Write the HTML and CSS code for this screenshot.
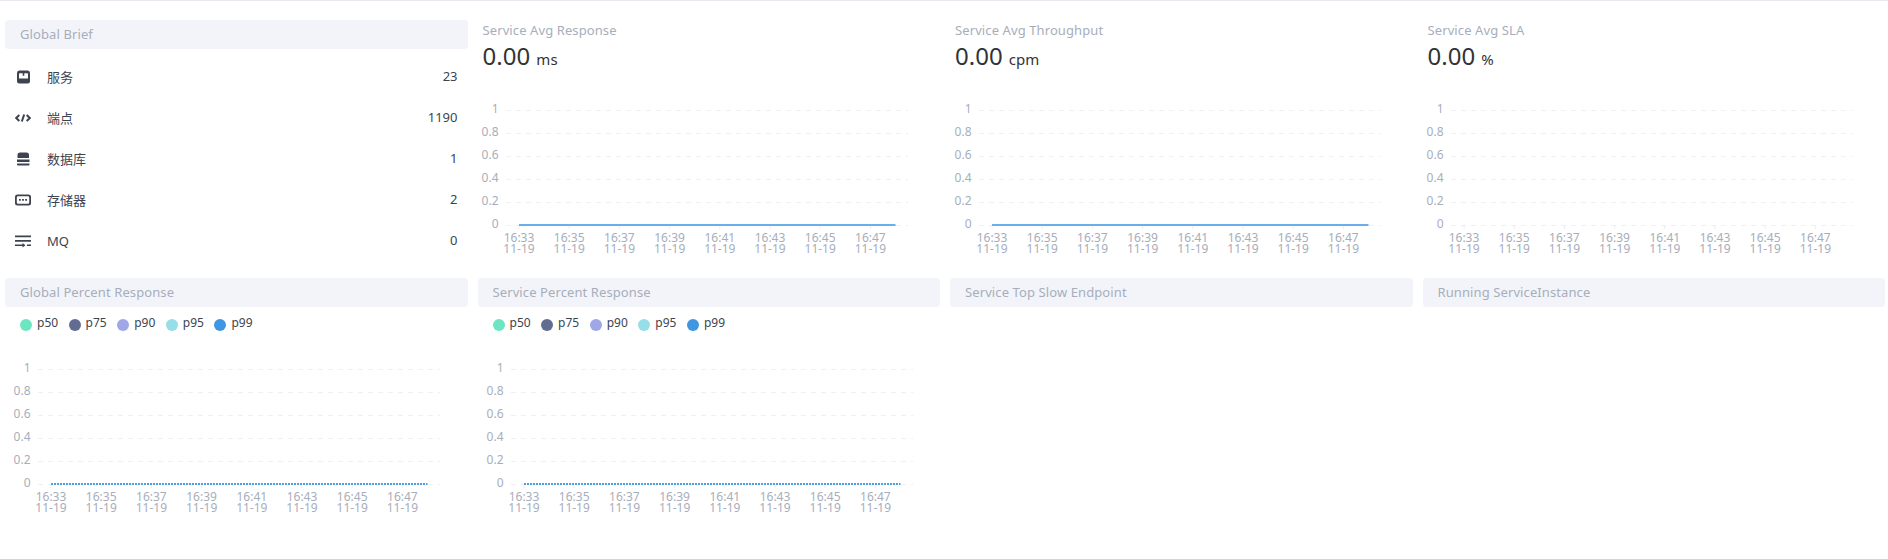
FILE: index.html
```html
<!DOCTYPE html>
<html lang="zh">
<head>
    <meta charset="UTF-8">
    <meta name="viewport" content="width=device-width, initial-scale=1.0">
    <title>Global Dashboard</title>
    <link rel="stylesheet" href="styles.css">
</head>
<body>
    <div class="dashboard">
        <section class="panel">
            <h2 class="panel-title">Global Brief</h2>
            <ul class="brief-list">
                <li class="brief-row">
                    <svg class="brief-icon" viewBox="0 0 16 16"><path fill-rule="evenodd" d="M4.300 1.500h8.400A2.500 2.500 0 0 1 15 4v8a2.500 2.500 0 0 1-2.500 2.500h-8A2.500 2.500 0 0 1 2 12V4a2.500 2.500 0 0 1 2.300-2.500zM4 5a.8.8 0 0 1 .8-.8h2.900v2.500h1.600V4.200h2.900a.8.8 0 0 1 .8.8v4.500H4z"/></svg>
                    <span class="brief-label">服务</span>
                    <span class="brief-num">23</span>
                </li>
                <li class="brief-row">
                    <svg class="brief-icon" viewBox="0 0 16 16"><path class="icon-line" d="M4.300 5 1.200 8l3.100 3M11.700 5 14.800 8l-3.100 3M9.200 4.500 6.800 11.500"/></svg>
                    <span class="brief-label">端点</span>
                    <span class="brief-num">1190</span>
                </li>
                <li class="brief-row">
                    <svg class="brief-icon" viewBox="0 0 16 16"><path d="M5 1.500h6.500A2.500 2.500 0 0 1 14 4v3H2.500V4A2.500 2.500 0 0 1 5 1.500zM2 8.500h12.500v2.500H2zM2 12.500h12.500v1a1 1 0 0 1-1 1H3a1 1 0 0 1-1-1z"/></svg>
                    <span class="brief-label">数据库</span>
                    <span class="brief-num">1</span>
                </li>
                <li class="brief-row">
                    <svg class="brief-icon" viewBox="0 0 16 16"><path fill-rule="evenodd" d="M2.500 2.500h11A2.500 2.500 0 0 1 16 5v6a2.500 2.500 0 0 1-2.500 2.500h-11A2.500 2.500 0 0 1 0 11V5a2.500 2.500 0 0 1 2.500-2.500zM3 4.300A1.200 1.200 0 0 0 1.800 5.500v5A1.200 1.200 0 0 0 3 11.700h10a1.200 1.200 0 0 0 1.200-1.200v-5A1.200 1.200 0 0 0 13 4.300z"/><path d="M4 7h1.800v1.800H4zM7.100 7h1.800v1.800H7.100zM10.200 7H12v1.800h-1.800z"/></svg>
                    <span class="brief-label">存储器</span>
                    <span class="brief-num">2</span>
                </li>
                <li class="brief-row">
                    <svg class="brief-icon" viewBox="0 0 16 16"><path d="M0 2.500h16v1.700H0zM0 7h16v1.700H0zM0 11.500h7.500V10l3 2.300-3 2.300V13.100H0zM12 11.500h4v1.600h-4z"/></svg>
                    <span class="brief-label">MQ</span>
                    <span class="brief-num">0</span>
                </li>
            </ul>
        </section>

        <section class="panel panel-stat">
            <h2 class="stat-title">Service Avg Response</h2>
            <p class="stat-value">0.00 <span class="stat-unit">ms</span></p>
            <div class="chart chart-top" data-series="solid"></div>
        </section>

        <section class="panel panel-stat">
            <h2 class="stat-title">Service Avg Throughput</h2>
            <p class="stat-value">0.00 <span class="stat-unit">cpm</span></p>
            <div class="chart chart-top" data-series="solid"></div>
        </section>

        <section class="panel panel-stat">
            <h2 class="stat-title">Service Avg SLA</h2>
            <p class="stat-value">0.00 <span class="stat-unit">%</span></p>
            <div class="chart chart-top" data-series="none"></div>
        </section>

        <section class="panel">
            <h2 class="panel-title">Global Percent Response</h2>
            <ul class="legend">
                <li class="legend-item"><i class="legend-dot p50"></i>p50</li>
                <li class="legend-item"><i class="legend-dot p75"></i>p75</li>
                <li class="legend-item"><i class="legend-dot p90"></i>p90</li>
                <li class="legend-item"><i class="legend-dot p95"></i>p95</li>
                <li class="legend-item"><i class="legend-dot p99"></i>p99</li>
            </ul>
            <div class="chart" data-series="dotted"></div>
        </section>

        <section class="panel">
            <h2 class="panel-title">Service Percent Response</h2>
            <ul class="legend">
                <li class="legend-item"><i class="legend-dot p50"></i>p50</li>
                <li class="legend-item"><i class="legend-dot p75"></i>p75</li>
                <li class="legend-item"><i class="legend-dot p90"></i>p90</li>
                <li class="legend-item"><i class="legend-dot p95"></i>p95</li>
                <li class="legend-item"><i class="legend-dot p99"></i>p99</li>
            </ul>
            <div class="chart" data-series="dotted"></div>
        </section>

        <section class="panel">
            <h2 class="panel-title">Service Top Slow Endpoint</h2>
        </section>

        <section class="panel">
            <h2 class="panel-title">Running ServiceInstance</h2>
        </section>
    </div>

    <script src="charts.js"></script>
</body>
</html>
```

FILE: styles.css
```css
* {
    box-sizing: border-box;
}

body {
    font-family: "Noto Sans", "Noto Sans CJK SC", sans-serif;
    font-size: 13px;
    color: #3d444f;
    background-color: #fff;
    margin: 0;
    border-top: 1px solid #e8e9ee;
}

.dashboard {
    display: grid;
    grid-template-columns: repeat(4, 462.5px);
    grid-template-rows: 258px auto;
    column-gap: 10px;
    padding: 19px 0 0 5px;
}

.panel-title {
    height: 29px;
    line-height: 28px;
    margin: 0;
    padding-left: 15px;
    font-size: 13px;
    font-weight: normal;
    letter-spacing: 0.1px;
    color: #a7aebb;
    background-color: #f3f4f9;
    border-radius: 4px;
}

.brief-list {
    list-style: none;
    margin: 0;
    padding: 7px 10px 0 0;
}

.brief-row {
    display: flex;
    align-items: center;
    height: 41px;
}

.brief-icon {
    flex: none;
    width: 16px;
    height: 16px;
    margin: 0 16px 0 10px;
    fill: #3d444f;
}

.icon-line {
    fill: none;
    stroke: #3d444f;
    stroke-width: 2;
}

.brief-label {
    flex: 1;
}

.brief-num {
    position: relative;
    top: -1px;
}

.panel-stat {
    padding-left: 5px;
}

.stat-title {
    height: 20px;
    line-height: 20px;
    margin: 0;
    font-size: 13px;
    font-weight: normal;
    letter-spacing: 0.1px;
    color: #a7aebb;
}

.stat-value {
    height: 34px;
    line-height: 32px;
    margin: 0;
    font-size: 24px;
    color: #333;
}

.stat-unit {
    font-size: 15px;
}

.chart {
    height: 160px;
}

.chart-top {
    margin: 26px 0 0 -9.500px;
}

.chart svg {
    display: block;
    overflow: visible;
}

.chart text {
    font-size: 12px;
    fill: #a7aebb;
}

.grid-line {
    stroke: #f0f0f3;
    stroke-dasharray: 5 5;
}

.tick {
    stroke: #eeeef1;
}

.line-solid {
    stroke: #6aaeea;
    stroke-width: 2;
}

.line-dotted {
    stroke: #4d9fe4;
    stroke-width: 2;
    stroke-dasharray: 2 1;
}

.legend {
    display: flex;
    gap: 10.500px;
    list-style: none;
    height: 18px;
    margin: 9px 0 25px;
    padding-left: 15px;
    font-size: 12px;
    line-height: 14px;
    color: #3d444f;
}

.legend-item {
    display: flex;
    align-items: flex-start;
    gap: 5px;
}

.legend-dot {
    width: 12px;
    height: 12px;
    margin-top: 3px;
    border-radius: 50%;
}

.p50 {
    background-color: #6be6c1;
}

.p75 {
    background-color: #626c91;
}

.p90 {
    background-color: #a0a7e6;
}

.p95 {
    background-color: #96dee8;
}

.p99 {
    background-color: #3f96e3;
}
```

FILE: charts.js
```js
const yLabels = ['1', '0.8', '0.6', '0.4', '0.2', '0'];
const xLabels = ['16:33', '16:35', '16:37', '16:39', '16:41', '16:43', '16:45', '16:47'];

const gridLeft = 33;
const gridRight = 435;
const firstTick = 46;
const tickStep = 50.2;
const lineEnd = 422.500;

function drawChart(el) {
    let svg = '<svg width="462" height="160">';

    yLabels.forEach((label, i) => {
        const y = 10.5 + i * 23;
        svg += `<line class="grid-line" x1="${gridLeft}" x2="${gridRight}" y1="${y}" y2="${y}"></line>`;
        svg += `<text x="25.500" y="${y + 2.5}" text-anchor="end">${label}</text>`;
    });

    xLabels.forEach((label, i) => {
        const x = firstTick + i * tickStep;
        svg += `<line class="tick" x1="${x}" x2="${x}" y1="125" y2="129"></line>`;
        svg += `<text text-anchor="middle"><tspan x="${x}" y="141.500">${label}</tspan><tspan x="${x}" dy="11">11-19</tspan></text>`;
    });

    const kind = el.dataset.series;
    if (kind !== 'none') {
        svg += `<line class="line-${kind}" x1="${firstTick}" x2="${lineEnd}" y1="125" y2="125"></line>`;
    }

    el.innerHTML = svg + '</svg>';
}

document.querySelectorAll('.chart').forEach(drawChart);
```
